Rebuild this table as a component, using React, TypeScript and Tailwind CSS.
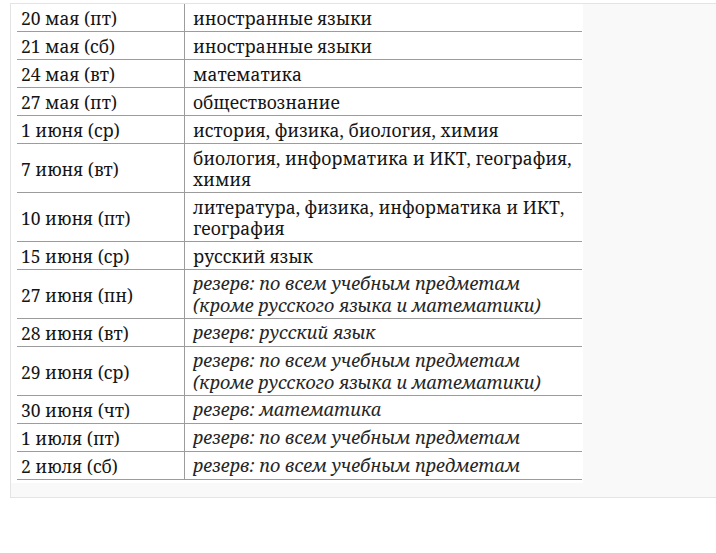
import React from "react";

type Row = { d: string; s: React.ReactNode; i?: boolean };

const rows: Row[] = [
  { d: "20 мая (пт)", s: "иностранные языки" },
  { d: "21 мая (сб)", s: "иностранные языки" },
  { d: "24 мая (вт)", s: "математика" },
  { d: "27 мая (пт)", s: "обществознание" },
  { d: "1 июня (ср)", s: "история, физика, биология, химия" },
  { d: "7 июня (вт)", s: <>биология, информатика и ИКТ, география,<br />химия</> },
  { d: "10 июня (пт)", s: <>литература, физика, информатика и ИКТ,<br />география</> },
  { d: "15 июня (ср)", s: "русский язык" },
  { d: "27 июня (пн)", s: <>резерв: по всем учебным предметам<br />(кроме русского языка и математики)</>, i: true },
  { d: "28 июня (вт)", s: "резерв: русский язык", i: true },
  { d: "29 июня (ср)", s: <>резерв: по всем учебным предметам<br />(кроме русского языка и математики)</>, i: true },
  { d: "30 июня (чт)", s: "резерв: математика", i: true },
  { d: "1 июля (пт)", s: "резерв: по всем учебным предметам", i: true },
  { d: "2 июля (сб)", s: "резерв: по всем учебным предметам", i: true },
];

export default function App() {
  return (
    <div className="w-[716px] h-[553px] bg-white pt-[3px] pl-[10px] [font-family:'Noto_Serif',serif] text-[17.5px] leading-[21px] text-[#151515]">
      <div className="h-[495px] bg-[#f9f9f9] border-t border-l border-b border-[#e4e4e4]">
        <div className="w-[572px] bg-white pl-[6px] pb-[3px] flex flex-col">
          {rows.map((r, k) => (
            <div key={k} className="flex border-b border-[#9c9c9c] w-[565px]">
              <div className="w-[168px] shrink-0 border-r border-[#9c9c9c] flex items-center pl-[4px] pt-[4px] pb-[2px] whitespace-nowrap [font-family:'Noto_Serif',serif] text-[17.5px]">
                {r.d}
              </div>
              <div
                className={
                  r.i
                    ? "flex-1 pl-[8px] py-[2px] whitespace-nowrap italic text-[#262626] [font-family:'Noto_Serif',serif] text-[18px] leading-[22px]"
                    : "flex-1 pl-[8px] pt-[4px] pb-[2px] whitespace-nowrap [font-family:'Noto_Serif',serif] text-[17.5px]"
                }
              >
                {r.s}
              </div>
            </div>
          ))}
        </div>
      </div>
    </div>
  );
}
